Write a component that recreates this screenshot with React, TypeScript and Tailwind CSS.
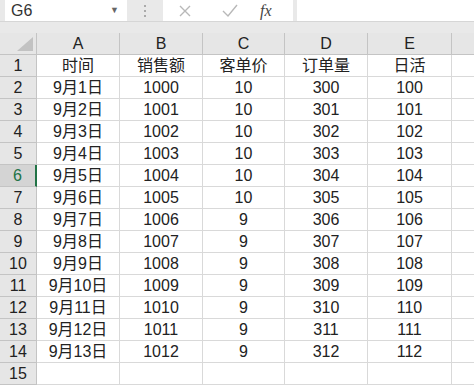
import React from "react";

const cols = ["A", "B", "C", "D", "E"];

const rows: string[][] = [
  ["时间", "销售额", "客单价", "订单量", "日活"],
  ["9月1日", "1000", "10", "300", "100"],
  ["9月2日", "1001", "10", "301", "101"],
  ["9月3日", "1002", "10", "302", "102"],
  ["9月4日", "1003", "10", "303", "103"],
  ["9月5日", "1004", "10", "304", "104"],
  ["9月6日", "1005", "10", "305", "105"],
  ["9月7日", "1006", "9", "306", "106"],
  ["9月8日", "1007", "9", "307", "107"],
  ["9月9日", "1008", "9", "308", "108"],
  ["9月10日", "1009", "9", "309", "109"],
  ["9月11日", "1010", "9", "310", "110"],
  ["9月12日", "1011", "9", "311", "111"],
  ["9月13日", "1012", "9", "312", "112"],
  ["", "", "", "", ""],
];

const font = { fontFamily: '"Liberation Sans", "Noto Sans CJK SC", sans-serif' };

const Toolbar = () => (
  <div className="flex h-[22px] items-stretch bg-[#e9e9e9] border-b border-[#d6d6d6]">
    <div className="ml-[5px] w-[122px] bg-white flex items-center justify-between pl-[6px] pr-[8px] text-[16px] text-[#333]">
      <span>G6</span>
      <span className="text-[9px] text-[#666]">▼</span>
    </div>
    <div className="w-[36px] flex flex-col items-center justify-center gap-[3px]">
      <span className="w-[2px] h-[2px] bg-[#aaa]" />
      <span className="w-[2px] h-[2px] bg-[#aaa]" />
      <span className="w-[2px] h-[2px] bg-[#aaa]" />
    </div>
    <div className="w-[130px] bg-white flex items-center">
      <svg width="16" height="16" viewBox="0 0 16 16" className="ml-[14px]">
        <path d="M3 3 L13 13 M13 3 L3 13" stroke="#b8b8b8" strokeWidth="1.4" />
      </svg>
      <svg width="18" height="16" viewBox="0 0 18 16" className="ml-[28px]">
        <path d="M2 8 L7 13 L16 2" stroke="#b8b8b8" strokeWidth="1.4" fill="none" />
      </svg>
      <span
        className="ml-[21px] text-[16px] italic text-[#444]"
        style={{ fontFamily: '"Liberation Serif", serif' }}
      >
        <i>f</i>x
      </span>
    </div>
    <div className="ml-[4px] flex-1 bg-white" />
  </div>
);

export default function App() {
  return (
    <div className="w-[474px] h-[390px] overflow-hidden bg-white text-[16px] text-[#222]" style={font}>
      <Toolbar />
      <div className="h-[11px] bg-[#e9e9e9]" />
      <div className="grid grid-cols-[37px_83px_83px_82px_83px_84px_22px]">
        <div className="h-[22px] bg-[#e6e6e6] border-r border-b border-[#c4c4c4] relative">
          <svg width="16" height="14" viewBox="0 0 16 14" className="absolute right-[3px] bottom-[3px]">
            <path d="M16 0 L16 14 L0 14 Z" fill="#c2c2c2" />
          </svg>
        </div>
        {cols.map((c) => (
          <div
            key={c}
            className="h-[22px] bg-[#e6e6e6] border-r border-b border-[#c4c4c4] flex items-center justify-center"
          >
            {c}
          </div>
        ))}
        <div className="h-[22px] bg-[#e6e6e6] border-b border-[#c4c4c4]" />
        {rows.map((r, i) => {
          const sel = i === 5;
          return (
            <React.Fragment key={i}>
              <div
                className={
                  sel
                    ? "h-[22px] bg-[#d4d4d4] border-r-2 border-r-[#217346] border-b border-b-[#c4c4c4] flex items-center justify-center text-[#217346]"
                    : "h-[22px] bg-[#e6e6e6] border-r border-b border-[#c4c4c4] flex items-center justify-center"
                }
              >
                {i + 1}
              </div>
              {r.map((v, j) => (
                <div
                  key={j}
                  className="h-[22px] border-r border-b border-[#d9d9d9] flex items-center justify-center whitespace-nowrap"
                >
                  {v}
                </div>
              ))}
              <div className="h-[22px] border-b border-[#d9d9d9]" />
            </React.Fragment>
          );
        })}
      </div>
    </div>
  );
}
